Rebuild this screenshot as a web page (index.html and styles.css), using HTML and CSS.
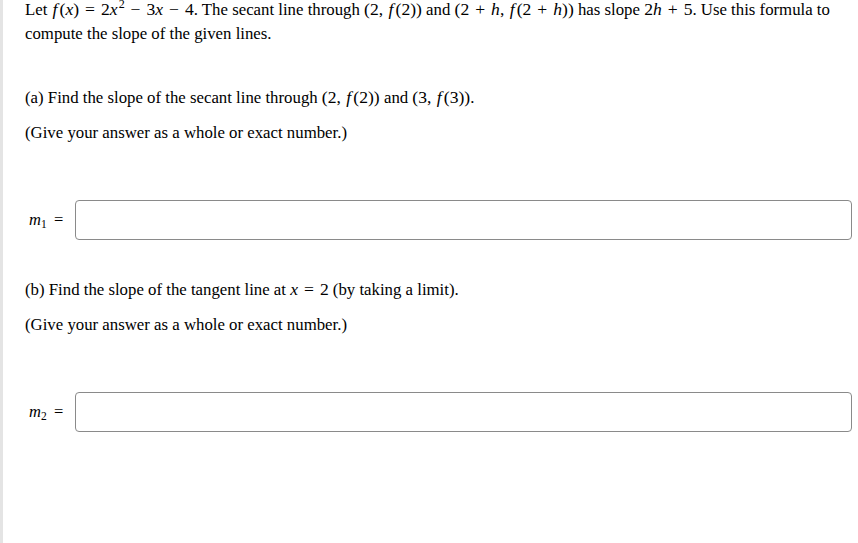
FILE: index.html
```html
<!DOCTYPE html>
<html>
<head>
<meta charset="utf-8">
<link rel="stylesheet" href="styles.css">
</head>
<body>
<div class="page">
  <p class="intro">Let <span class="m"><i class="f">f</i>(<i>x</i>)<span class="op">=</span>2<i>x</i><sup>2</sup><span class="op">−</span>3<i>x</i><span class="op">−</span>4</span>. The secant line through <span class="m">(2, <i class="f">f</i>(2))</span> and <span class="m">(2<span class="op">+</span><i>h</i>, <i class="f">f</i>(2<span class="op">+</span><i>h</i>))</span> has slope <span class="m">2<i>h</i><span class="op">+</span>5</span>. Use this formula to compute the slope of the given lines.</p>

  <section class="part part-a">
    <p class="q">(a) Find the slope of the secant line through <span class="m">(2, <i class="f">f</i>(2))</span> and <span class="m">(3, <i class="f">f</i>(3))</span>.</p>
    <p class="hint">(Give your answer as a whole or exact number.)</p>
    <div class="answer">
      <span class="label"><i>m</i><sub>1</sub><span class="op">=</span></span>
      <div class="box"></div>
    </div>
  </section>

  <section class="part part-b">
    <p class="q">(b) Find the slope of the tangent line at <span class="m"><i>x</i><span class="op">=</span>2</span> (by taking a limit).</p>
    <p class="hint">(Give your answer as a whole or exact number.)</p>
    <div class="answer">
      <span class="label"><i>m</i><sub>2</sub><span class="op">=</span></span>
      <div class="box"></div>
    </div>
  </section>
</div>
</body>
</html>
```

FILE: styles.css
```css
html, body {
  margin: 0;
  padding: 0;
  background: #ffffff;
}
body {
  font-family: "Liberation Serif", "Times New Roman", serif;
  font-size: 16.8px;
  line-height: 24px;
  color: #000;
}
.page {
  border-left: 3px solid #e4e4e4;
  min-height: 543px;
  box-sizing: border-box;
  padding: 0 6px 0 22px;
  display: flex;
  flex-direction: column;
}
p {
  margin: 0;
}
.intro {
  margin-top: -2px;
  padding-right: 10px;
}
.m {
  white-space: nowrap;
  font-size: 17.6px;
  line-height: 1;
}
.op {
  margin: 0 0.34em;
}
.f {
  padding: 0 0.12em 0 0.06em;
}
sup {
  font-size: 12px;
  line-height: 0;
  vertical-align: 7px;
  margin-left: 1px;
}
sub {
  font-size: 11.5px;
  line-height: 0;
  vertical-align: -3px;
}
.part {
  display: flex;
  flex-direction: column;
}
.part-a {
  margin-top: 40px;
}
.part-b {
  margin-top: 38px;
}
.hint {
  margin-top: 11px;
}
.answer {
  display: flex;
  align-items: center;
  margin-top: 55px;
}
.label {
  width: 50px;
  padding-left: 4px;
  box-sizing: border-box;
  font-size: 16.5px;
  white-space: nowrap;
}
.label .op {
  margin: 0 0 0 0.45em;
}
.box {
  flex: 1;
  height: 40px;
  box-sizing: border-box;
  border: 1.5px solid #8a8a8a;
  border-radius: 4px;
  background: #fff;
}
```
